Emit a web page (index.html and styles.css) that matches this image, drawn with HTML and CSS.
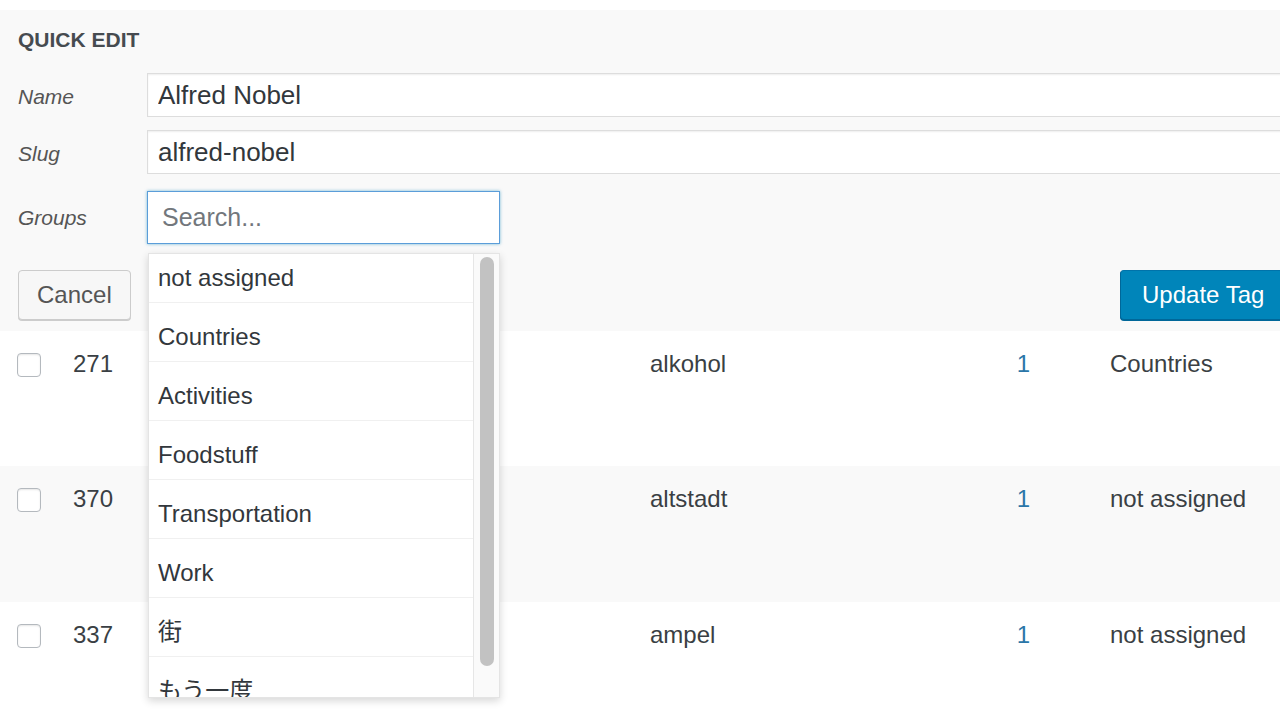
FILE: index.html
```html
<!DOCTYPE html>
<html lang="en">
<head>
<meta charset="utf-8">
<title>Quick Edit</title>
<link rel="stylesheet" href="styles.css">
</head>
<body>
<div class="screen">
  <section class="quick-edit">
    <h2 class="qe-title">QUICK EDIT</h2>
    <div class="qe-field">
      <label class="qe-label">Name</label>
      <input class="text-input" type="text" value="Alfred Nobel">
    </div>
    <div class="qe-field slug">
      <label class="qe-label">Slug</label>
      <input class="text-input" type="text" value="alfred-nobel">
    </div>
    <div class="qe-field groups">
      <label class="qe-label">Groups</label>
      <div class="search-wrap">
        <input class="text-input search" type="text" placeholder="Search...">
        <div class="dropdown">
          <ul class="options">
            <li class="option">not assigned</li>
            <li class="option">Countries</li>
            <li class="option">Activities</li>
            <li class="option">Foodstuff</li>
            <li class="option">Transportation</li>
            <li class="option">Work</li>
            <li class="option">街</li>
            <li class="option">もう一度</li>
          </ul>
          <div class="track"><div class="thumb"></div></div>
        </div>
      </div>
    </div>
    <div class="qe-actions">
      <button class="btn">Cancel</button>
      <button class="btn primary">Update Tag</button>
    </div>
  </section>

  <div class="rows">
    <div class="row">
      <span class="check"></span>
      <span class="cell id">271</span>
      <span class="cell name"></span>
      <span class="cell slugcol">alkohol</span>
      <span class="cell count">1</span>
      <span class="cell group">Countries</span>
    </div>
    <div class="row alt">
      <span class="check"></span>
      <span class="cell id">370</span>
      <span class="cell name"></span>
      <span class="cell slugcol">altstadt</span>
      <span class="cell count">1</span>
      <span class="cell group">not assigned</span>
    </div>
    <div class="row">
      <span class="check"></span>
      <span class="cell id">337</span>
      <span class="cell name"></span>
      <span class="cell slugcol">ampel</span>
      <span class="cell count">1</span>
      <span class="cell group">not assigned</span>
    </div>
  </div>
</div>
</body>
</html>
```

FILE: styles.css
```css
html, body {
  margin: 0;
  padding: 0;
  background: #fff;
  overflow: hidden;
}

body {
  font-family: "Liberation Sans", Arial, "Noto Sans CJK JP", sans-serif;
  color: #3a3f44;
}

.screen {
  width: 1310px;
  padding-top: 10px;
}

.quick-edit {
  background: #f9f9f9;
  padding: 15px 20px 11px 18px;
}

.qe-title {
  margin: 0;
  font-size: 21px;
  font-weight: bold;
  line-height: 30px;
  color: #464b50;
}

.qe-field {
  display: grid;
  grid-template-columns: 129px 1fr;
  align-items: center;
  margin-top: 18px;
}

.qe-field.slug {
  margin-top: 13px;
}

.qe-field.groups {
  margin-top: 17px;
}

.qe-label {
  font-size: 21px;
  font-style: italic;
  color: #555;
  padding-top: 3px;
}

.qe-field.groups .qe-label {
  padding-top: 0;
}

.text-input {
  box-sizing: border-box;
  height: 44px;
  width: 100%;
  margin: 0;
  padding: 0 10px;
  border: 1px solid #ddd;
  border-radius: 0;
  background: #fff;
  box-shadow: inset 0 1px 2px rgba(0, 0, 0, 0.07);
  font-family: "Liberation Sans", Arial, sans-serif;
  font-size: 26px;
  color: #32373c;
  outline: none;
}

.search-wrap {
  position: relative;
  width: 353px;
}

.text-input.search {
  height: 53px;
  padding-left: 14px;
  font-size: 25px;
  border-color: #5b9dd9;
  box-shadow: 0 0 3px rgba(30, 140, 190, 0.6);
}

.text-input.search::placeholder {
  color: #72777c;
}

.dropdown {
  position: absolute;
  left: 1px;
  top: 62px;
  width: 352px;
  height: 445px;
  box-sizing: border-box;
  background: #fff;
  border: 1px solid #e4e4e4;
  box-shadow: 0 3px 8px rgba(0, 0, 0, 0.16);
  display: flex;
  overflow: hidden;
  z-index: 5;
}

.options {
  flex: 1;
  list-style: none;
  margin: -10px 0 0 0;
  padding: 0;
}

.option {
  padding: 10px 0 0 9px;
  line-height: 48px;
  height: 48px;
  border-bottom: 1px solid #f0f0f0;
  font-size: 24px;
  color: #32373c;
  font-family: "Liberation Sans", Arial, "Noto Sans CJK JP", sans-serif;
  white-space: nowrap;
}

.track {
  border-left: 1px solid #e6e6e6;
  background: #fafafa;
  padding: 3px 0 0 6px;
  box-sizing: border-box;
  width: 26px;
}

.thumb {
  width: 14px;
  height: 409px;
  border-radius: 7px;
  background: #c2c2c2;
}

.qe-actions {
  display: flex;
  justify-content: space-between;
  margin-top: 26px;
}

.btn {
  box-sizing: border-box;
  height: 50px;
  margin: 0;
  padding: 0 18px;
  border: 1px solid #ccc;
  border-radius: 4px;
  background: #f7f7f7;
  box-shadow: 0 1px 0 #ccc;
  font-family: "Liberation Sans", Arial, sans-serif;
  font-size: 24px;
  color: #555;
}

.btn.primary {
  width: 170px;
  padding: 0 0 0 21px;
  text-align: left;
  background: #0085ba;
  border-color: #0073aa #006799 #006799;
  box-shadow: 0 1px 0 #006799;
  color: #fff;
}

.rows {
  display: flex;
  flex-direction: column;
}

.row {
  display: grid;
  grid-template-columns: 56px 75px 502px 300px 80px 1fr;
  align-items: start;
  height: 136px;
  box-sizing: border-box;
  padding: 18px 0 0 17px;
  background: #fff;
}

.row:first-child {
  height: 135px;
}

.row.alt {
  background: #f9f9f9;
}

.check {
  box-sizing: border-box;
  width: 24px;
  height: 24px;
  margin-top: 4px;
  border: 1px solid #b4b9be;
  border-radius: 4px;
  background: #fff;
  box-shadow: inset 0 1px 2px rgba(0, 0, 0, 0.1);
}

.cell {
  font-size: 24px;
  line-height: 30px;
  color: #3a3f44;
}

.count {
  text-align: right;
  color: #2a76a8;
}

.group {
  padding-left: 80px;
  white-space: nowrap;
}
```
